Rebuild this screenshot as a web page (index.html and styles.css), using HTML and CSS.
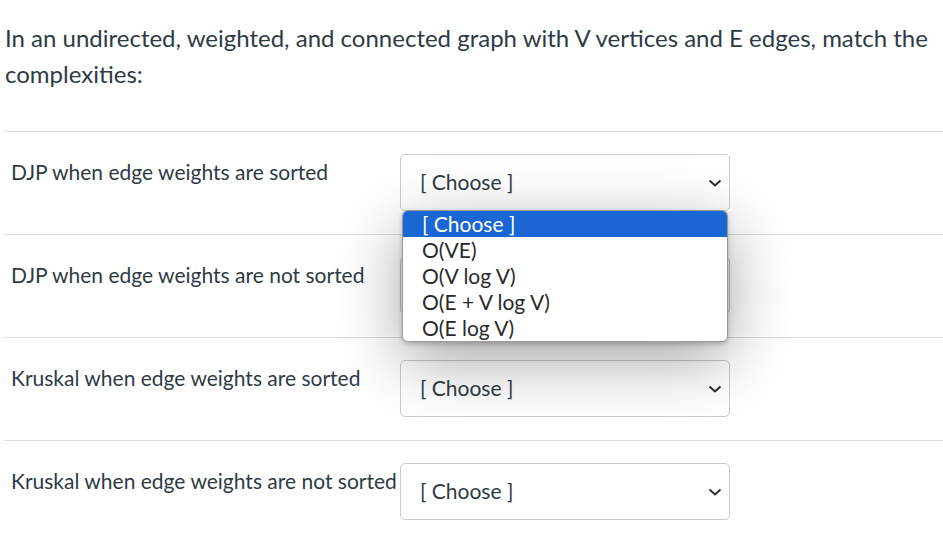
FILE: index.html
```html
<!DOCTYPE html>
<html>
<head>
<meta charset="utf-8">
<link rel="stylesheet" href="styles.css">
</head>
<body>
<div class="question">
  <p class="prompt">In an undirected, weighted, and connected graph with V vertices and E edges, match the complexities:</p>
  <div class="rows">
    <div class="row">
      <div class="label">DJP when edge weights are sorted</div>
      <div class="select open">
        <span class="value">[ Choose ]</span>
        <svg class="chev" width="14" height="10" viewBox="0 0 14 10"><polyline points="1.5,2.5 7,7.5 12.5,2.5" fill="none" stroke="#2d2d2d" stroke-width="2"/></svg>
        <div class="menu">
          <div class="opt active">[ Choose ]</div>
          <div class="opt">O(VE)</div>
          <div class="opt">O(V log V)</div>
          <div class="opt">O(E + V log V)</div>
          <div class="opt">O(E log V)</div>
        </div>
      </div>
    </div>
    <div class="row">
      <div class="label">DJP when edge weights are not sorted</div>
      <div class="select">
        <span class="value">[ Choose ]</span>
        <svg class="chev" width="14" height="10" viewBox="0 0 14 10"><polyline points="1.5,2.5 7,7.5 12.5,2.5" fill="none" stroke="#2d2d2d" stroke-width="2"/></svg>
      </div>
    </div>
    <div class="row">
      <div class="label">Kruskal when edge weights are sorted</div>
      <div class="select">
        <span class="value">[ Choose ]</span>
        <svg class="chev" width="14" height="10" viewBox="0 0 14 10"><polyline points="1.5,2.5 7,7.5 12.5,2.5" fill="none" stroke="#2d2d2d" stroke-width="2"/></svg>
      </div>
    </div>
    <div class="row">
      <div class="label">Kruskal when edge weights are not sorted</div>
      <div class="select">
        <span class="value">[ Choose ]</span>
        <svg class="chev" width="14" height="10" viewBox="0 0 14 10"><polyline points="1.5,2.5 7,7.5 12.5,2.5" fill="none" stroke="#2d2d2d" stroke-width="2"/></svg>
      </div>
    </div>
  </div>
</div>
</body>
</html>
```
FILE: styles.css
```css
html, body {
  margin: 0;
  padding: 0;
  background: #ffffff;
}
body {
  font-family: Lato, "Open Sans", "Liberation Sans", sans-serif;
  color: #2d3b45;
  width: 943px;
  height: 534px;
  overflow: hidden;
}
.question {
  margin-left: 4px;
}
.prompt {
  margin: 0;
  padding: 20px 0 0 1px;
  font-size: 24px;
  line-height: 36px;
  height: 131px;
  box-sizing: border-box;
}
.row {
  display: flex;
  align-items: flex-start;
  border-top: 1px solid #dcdcdc;
  height: 102px;
}
.label {
  width: 389px;
  padding: 27px 0 0 7px;
  font-size: 21px;
  line-height: 26px;
  white-space: nowrap;
}
.select {
  position: relative;
  margin-top: 22px;
  width: 330px;
  height: 57px;
  box-sizing: border-box;
  border: 1px solid #c7cdd1;
  border-radius: 5px;
  background: #fff;
  display: flex;
  align-items: center;
  justify-content: space-between;
  padding: 0 7px 3px 19px;
  font-size: 21px;
}
.chev {
  display: block;
  margin-top: 3px;
}
.menu {
  position: absolute;
  top: 55px;
  left: 1px;
  width: 326px;
  height: 132px;
  box-sizing: border-box;
  border: 1px solid #9a9a9a;
  border-radius: 6px;
  background: #fff;
  padding: 0;
  overflow: hidden;
  z-index: 5;
  box-shadow: 0 18px 64px rgba(0, 0, 0, 0.36), 0 2px 5px rgba(0, 0, 0, 0.22);
  color: #2a2a2a;
}
.opt {
  height: 26px;
  line-height: 26px;
  padding-left: 19px;
  font-size: 21px;
}
.opt.active {
  background: #1a67d3;
  color: #fff;
}
```
